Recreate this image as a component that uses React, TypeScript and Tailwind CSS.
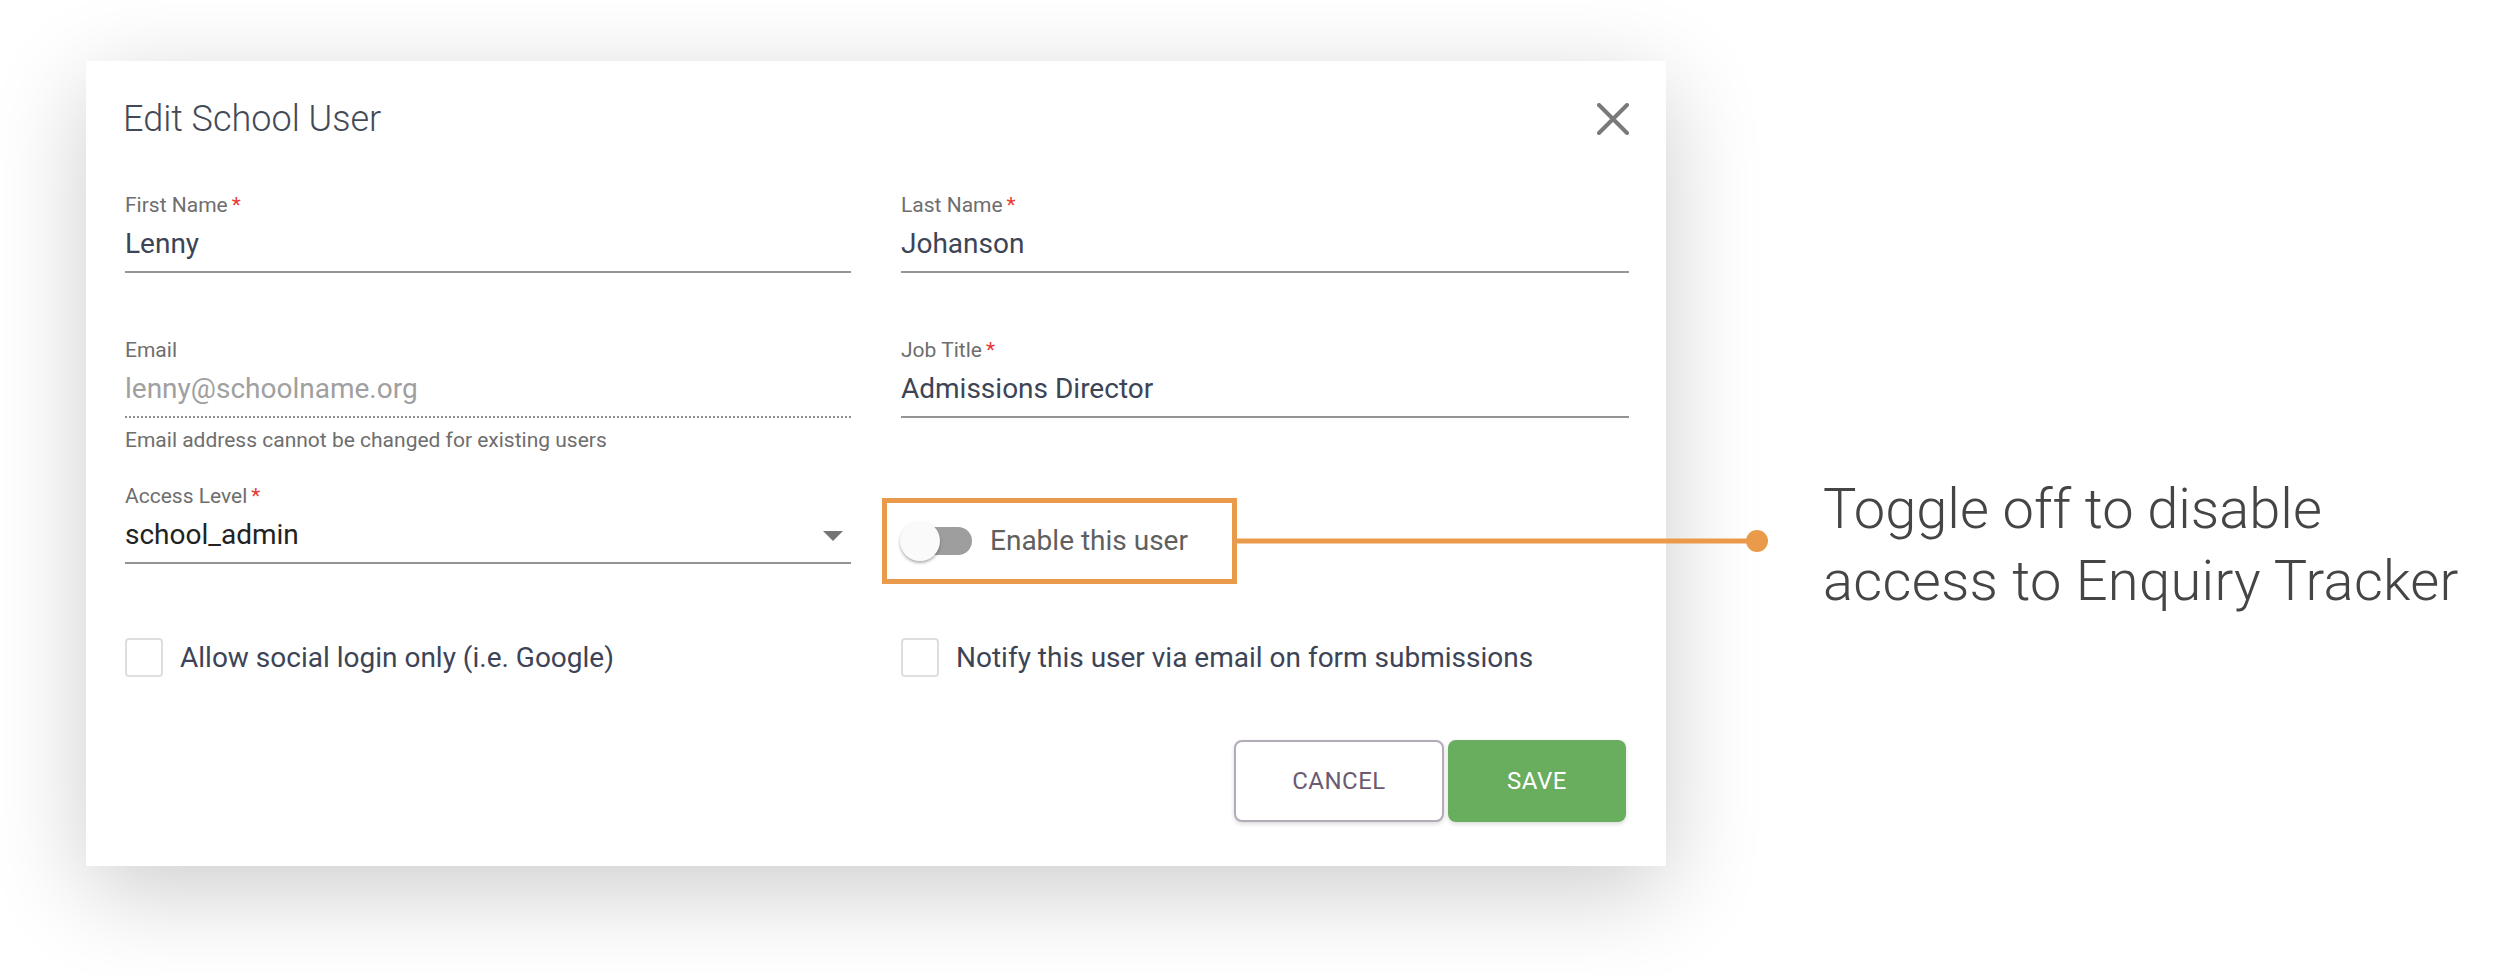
import React from 'react';

const font = "font-['Roboto','Liberation_Sans',sans-serif]";

function Label({ text, required }: { text: string; required?: boolean }) {
  return (
    <div className="h-[24px] leading-[24px] text-[21px] text-[#6e6e6e]">
      {text}
      {required && <span className="ml-[4px] text-[#e53935]">*</span>}
    </div>
  );
}

function TextField({ label, value, required }: { label: string; value: string; required?: boolean }) {
  return (
    <div className="flex flex-col">
      <Label text={label} required={required} />
      <div className="h-[56px] flex items-center border-b-2 border-[#949494] text-[28px] text-[#3c4456]">
        {value}
      </div>
    </div>
  );
}

function Checkbox({ label }: { label: string }) {
  return (
    <div className="flex items-center gap-[17px]">
      <div className="w-[38px] h-[39px] rounded-[4px] border-2 border-[#dedede] bg-white" />
      <span className="text-[28px] leading-[34px] text-[#3c4456]">{label}</span>
    </div>
  );
}

export default function App() {
  return (
    <div className={`w-[2508px] h-[978px] bg-white flex items-start overflow-hidden ${font}`}>
      {/* dialog */}
      <div className="ml-[86px] mt-[61px] w-[1580px] h-[805px] bg-white shadow-[0_25px_90px_rgba(0,0,0,0.2)] pl-[39px] pr-[37px] flex flex-col">
        <div className="h-[114px] flex items-center justify-between">
          <h1 className="text-[36px] font-light text-[#434a57] -ml-[2px] mt-[2px]">Edit School User</h1>
          <svg width="32" height="32" viewBox="0 0 32 32" className="mt-[2px]">
            <path d="M2 2 L30 30 M30 2 L2 30" stroke="#7a7a7a" strokeWidth="4" strokeLinecap="round" />
          </svg>
        </div>

        <div className="mt-[18px] grid grid-cols-[726px_728px] gap-x-[50px]">
          <TextField label="First Name" value="Lenny" required />
          <TextField label="Last Name" value="Johanson" required />
        </div>

        <div className="mt-[65px] grid grid-cols-[726px_728px] gap-x-[50px] items-start">
          <div className="flex flex-col">
            <Label text="Email" />
            <div className="h-[56px] flex items-center border-b-2 border-dotted border-[#8e8e8e] text-[28px] text-[#a0a0a0]">
              lenny@schoolname.org
            </div>
            <div className="mt-[10px] h-[24px] leading-[24px] text-[21px] text-[#6e6e6e]">
              Email address cannot be changed for existing users
            </div>
          </div>
          <TextField label="Job Title" value="Admissions Director" required />
        </div>

        <div className="mt-[32px] grid grid-cols-[726px_728px] gap-x-[50px] items-start">
          <div className="flex flex-col">
            <Label text="Access Level" required />
            <div className="h-[56px] flex items-center justify-between border-b-2 border-[#949494] text-[28px] text-[#222]">
              <span>school_admin</span>
              <svg width="20" height="10" viewBox="0 0 20 10" className="mr-[8px] mt-[2px]">
                <path d="M0 0 L20 0 L10 10 Z" fill="#757575" />
              </svg>
            </div>
          </div>
          <div className="mt-[14px] -ml-[19px] relative w-[355px] h-[86px] border-[5px] border-[#e99b4b] flex items-center pl-[13px] gap-[18px]">
            <div className="relative w-[72px] h-[40px]">
              <div className="absolute left-[4px] top-[6px] w-[68px] h-[28px] rounded-full bg-[#9e9e9e]" />
              <div className="absolute left-0 top-0 w-[40px] h-[40px] rounded-full bg-[#fafafa] shadow-[0_2px_3px_rgba(0,0,0,0.3)]" />
            </div>
            <span className="text-[28px] text-[#5f5f5f]">Enable this user</span>
            {/* connector to annotation */}
            <div className="absolute left-full top-1/2 -translate-y-1/2 w-[520px] h-[5px] bg-[#e99b4b]" />
            <div className="absolute left-[calc(100%+514px)] top-1/2 -translate-y-1/2 w-[22px] h-[22px] rounded-full bg-[#e99b4b]" />
          </div>
        </div>

        <div className="mt-[54px] grid grid-cols-[726px_728px] gap-x-[50px] items-center">
          <Checkbox label="Allow social login only (i.e. Google)" />
          <Checkbox label="Notify this user via email on form submissions" />
        </div>

        <div className="mt-[63px] flex justify-end gap-[4px] mr-[3px]">
          <button className="w-[210px] h-[82px] rounded-[8px] border-2 border-[#b3abb7] bg-white text-[24px] tracking-[0.5px] text-[#6a5a72] shadow-[0_2px_4px_rgba(0,0,0,0.15)]">
            CANCEL
          </button>
          <button className="w-[178px] h-[82px] rounded-[8px] bg-[#69ad5e] text-[24px] tracking-[0.5px] text-white shadow-[0_2px_4px_rgba(0,0,0,0.15)]">
            SAVE
          </button>
        </div>
      </div>

      {/* annotation */}
      <div className="ml-[157px] mt-[473px] text-[56px] leading-[72px] font-light text-[#454545]">
        <div>Toggle off to disable</div>
        <div className="tracking-[0.3px]">access to Enquiry Tracker</div>
      </div>
    </div>
  );
}
